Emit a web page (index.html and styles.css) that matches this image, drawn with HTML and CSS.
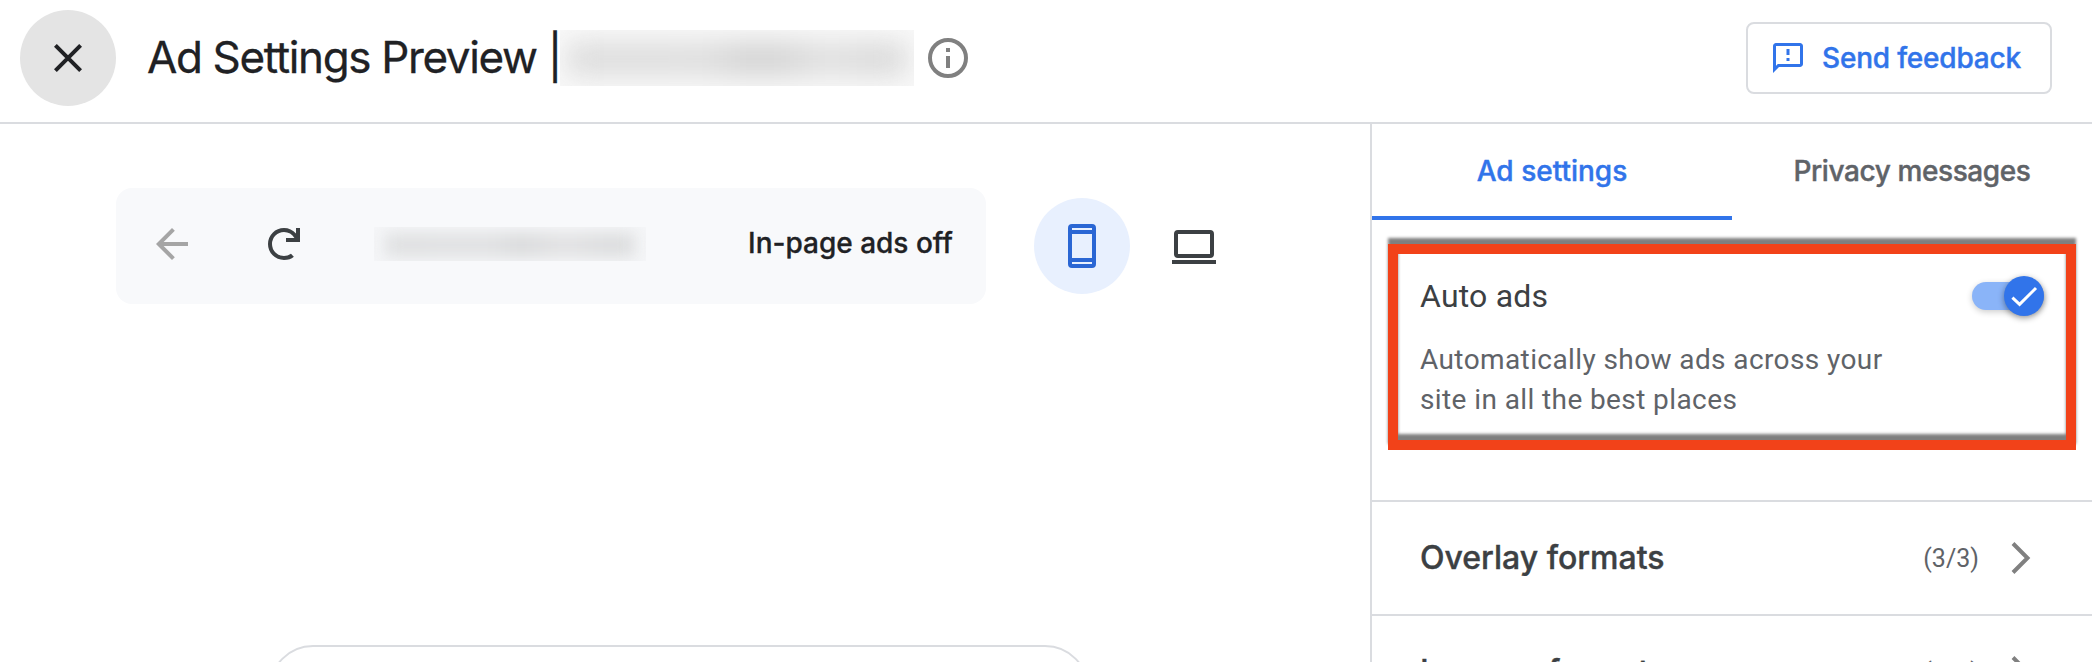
FILE: index.html
```
<!DOCTYPE html>
<html lang="en">
<head>
<meta charset="UTF-8" />
<meta name="viewport" content="width=device-width, initial-scale=1.0"/>
<title>Ad Settings Preview</title>
<link rel="stylesheet" href="styles.css">
</head>
<body>

<header class="header">
  <button class="close-btn" aria-label="Close">
    <svg width="28" height="28" viewBox="0 0 28 28"><path d="M1.4 1.4 L26.6 26.6 M26.6 1.4 L1.4 26.6" stroke="#202124" stroke-width="4" fill="none"/></svg>
  </button>
  <h1 class="title">Ad Settings Preview |</h1>
  <span class="redacted redacted-title"></span>
  <svg class="info" width="40" height="40" viewBox="0 0 40 40">
    <circle cx="20" cy="20" r="18" stroke="#808080" stroke-width="4" fill="none"/>
    <path d="M18 10h4v4h-4zM18 18h4v12h-4z" fill="#808080"/>
  </svg>
  <button class="feedback-btn">
    <svg width="36" height="36" viewBox="0 0 24 24" fill="#3174ea"><path d="M20 2H4c-1.1 0-1.99.9-1.99 2L2 22l4-4h14c1.1 0 2-.9 2-2V4c0-1.100-.9-2-2-2zm0 14H5.170l-.590.590-.580.580V4h16v12zM11 12h2v2h-2zm0-6h2v4h-2z"/></svg>
    <span class="feedback-label">Send feedback</span>
  </button>
</header>

<main class="main">
  <section class="preview">
    <div class="toolbar">
      <div class="nav-bar">
        <svg width="48" height="48" viewBox="0 0 24 24" fill="#a5a5a5"><path d="M20 11H7.830l5.590-5.590L12 4l-8 8 8 8 1.410-1.410L7.830 13H20v-2z"/></svg>
        <svg class="reload" width="48" height="48" viewBox="0 0 24 24" fill="#3c4043"><path d="M12 20q-3.350 0-5.675-2.325T4 12q0-3.350 2.325-5.675T12 4q1.725 0 3.300.712T18 6.750V4h2v7h-7V9h4.200q-.8-1.400-2.187-2.200T12 6Q9.500 6 7.750 7.750T6 12q0 2.500 1.750 4.250T12 18q1.925 0 3.475-1.100l1.450 1.450Q15.100 20 12 20z"/></svg>
        <span class="redacted redacted-url"></span>
        <span class="ads-state">In-page ads off</span>
      </div>
      <button class="device-btn active" aria-label="Mobile">
        <svg width="28" height="44" viewBox="0 0 28 44" fill="none" stroke="#2a66d4" stroke-width="4"><rect x="2" y="2" width="24" height="40" rx="2"/><path d="M2 8h24M2 36h24"/></svg>
      </button>
      <button class="device-btn" aria-label="Desktop">
        <svg width="44" height="36" viewBox="0 -2 44 36" fill="none" stroke="#3c4043" stroke-width="4"><rect x="4" y="2" width="36" height="24" rx="2"/><path d="M0 32h44"/></svg>
      </button>
    </div>
    <div class="phone-frame"></div>
  </section>

  <aside class="panel">
    <nav class="tabs">
      <a class="tab active">Ad settings</a>
      <a class="tab">Privacy messages</a>
    </nav>

    <div class="auto-ads">
      <div class="auto-ads-head">
        <h2>Auto ads</h2>
        <span class="toggle">
          <span class="thumb">
            <svg width="40" height="40" viewBox="0 0 40 40"><path d="M8.400 21.600 L15.600 28.400 L32 12" stroke="#fff" stroke-width="3" fill="none"/></svg>
          </span>
        </span>
      </div>
      <p>Automatically show ads across your<br>site in all the best places</p>
    </div>

    <div class="format-row">
      <span class="format-name">Overlay formats</span>
      <span class="count">(3/3)</span>
      <svg width="20" height="32" viewBox="0 0 20 32"><path d="M2 1.500 L16.500 16 L2 30.500" stroke="#808080" stroke-width="4" fill="none"/></svg>
    </div>
    <div class="format-row">
      <span class="format-name">In-page formats</span>
      <span class="count">(3/3)</span>
      <svg width="20" height="32" viewBox="0 0 20 32"><path d="M2 1.500 L16.500 16 L2 30.500" stroke="#808080" stroke-width="4" fill="none"/></svg>
    </div>
  </aside>
</main>

</body>
</html>
```
FILE: styles.css
```
* {
  box-sizing: border-box;
}
body {
  margin: 0;
  height: 662px;
  overflow: hidden;
  background: #fff;
  color: #202124;
  font-family: Inter, Roboto, sans-serif;
}
button {
  padding: 0;
  border: none;
  background: none;
  font: inherit;
}
svg {
  display: block;
  flex: none;
}

/* header */
.header {
  display: flex;
  align-items: center;
  height: 124px;
  padding: 0 40px 6px 20px;
  border-bottom: 2px solid #dadce0;
}
.close-btn {
  display: flex;
  align-items: center;
  justify-content: center;
  width: 96px;
  height: 96px;
  border-radius: 50%;
  background: #e4e4e4;
}
.title {
  width: 413px;
  margin: 0 0 0 31px;
  font-size: 44px;
  font-weight: 400;
  letter-spacing: -1.36px;
  line-height: 54px;
  padding-bottom: 2px;
  -webkit-text-stroke: 0.3px;
  white-space: nowrap;
}
/* blurred out site names */
.redacted {
  flex: none;
  display: flex;
  align-items: center;
  justify-content: center;
  overflow: hidden;
}
.redacted::before {
  content: "";
  flex: none;
}
.redacted-title {
  width: 354px;
  height: 56px;
  background: #f9f9f9;
}
.redacted-title::before {
  width: 340px;
  height: 32px;
  margin-top: 2px;
  background: linear-gradient(90deg, #dadada, #dcdcdc 40%, #cfcfcf 54%, #d2d2d2 64%, #dfdfdf 76%, #d8d8d8 90%);
  filter: blur(14px);
}
.info {
  margin-left: 14px;
}
.feedback-btn {
  display: flex;
  align-items: center;
  width: 306px;
  height: 72px;
  margin-left: auto;
  padding-left: 22px;
  border: 2px solid #dadce0;
  border-radius: 8px;
  color: #3174ea;
}
.feedback-label {
  margin-left: 16px;
  font-size: 28px;
  font-weight: 500;
  letter-spacing: -0.2px;
  -webkit-text-stroke: 0.4px;
  white-space: nowrap;
}

/* preview */
.main {
  display: flex;
  height: 538px;
}
.preview {
  width: 1370px;
  padding: 64px 0 0 116px;
  overflow: hidden;
}
.toolbar {
  display: flex;
  align-items: center;
}
.nav-bar {
  display: flex;
  align-items: center;
  width: 870px;
  height: 116px;
  margin-right: 48px;
  padding: 0 32px 4px;
  border-radius: 16px;
  background: #f8f9fb;
}
.reload {
  margin-left: 64px;
}
.redacted-url {
  width: 272px;
  height: 34px;
  margin-left: 66px;
  background: #f5f6f8;
}
.redacted-url::before {
  width: 250px;
  height: 24px;
  margin-top: 2px;
  background: linear-gradient(90deg, #dfe0e1, #e0e1e2 42%, #d9dadb 54%, #e2e2e3 72%, #dcddde 88%);
  filter: blur(8px);
}
.ads-state {
  margin-left: 102px;
  padding-bottom: 2px;
  font-size: 28px;
  font-weight: 500;
  line-height: 34px;
  -webkit-text-stroke: 0.3px;
  white-space: nowrap;
}
.device-btn {
  display: flex;
  align-items: center;
  justify-content: center;
  width: 96px;
  height: 96px;
  margin-right: 16px;
  border-radius: 50%;
}
.device-btn.active {
  background: #e8f0fe;
}
.phone-frame {
  width: 820px;
  height: 600px;
  margin: 341px 0 0 153px;
  border: 2px solid #dadce0;
  border-radius: 44px;
}

/* settings panel */
.panel {
  width: 722px;
  border-left: 2px solid #dadce0;
}
.tabs {
  display: flex;
  height: 96px;
}
.tab {
  width: 360px;
  padding-top: 27px;
  border-bottom: 4px solid transparent;
  color: #5f6368;
  font-size: 28px;
  font-weight: 500;
  letter-spacing: -0.4px;
  line-height: 40px;
  text-align: center;
  -webkit-text-stroke: 0.4px;
  white-space: nowrap;
}
.tab.active {
  border-bottom-color: #3174ea;
  color: #3174ea;
  letter-spacing: 0;
}
.auto-ads {
  position: relative;
  height: 206px;
  margin: 24px 16px 50px;
  padding: 28px 32px 0;
  font-family: Roboto, sans-serif;
}
/* highlight frame, the shadow falls upwards */
.auto-ads::after {
  content: "";
  position: absolute;
  inset: 0;
  border: 10px solid #f24219;
  filter: drop-shadow(0 -6px 1.5px rgba(0,0,0,.5));
}
.auto-ads-head {
  display: flex;
  align-items: center;
  justify-content: space-between;
  height: 48px;
}
.auto-ads h2 {
  margin: 0;
  color: #3c4043;
  font-size: 32px;
  font-weight: 400;
  letter-spacing: 0.2px;
}
.auto-ads p {
  margin: 20px 0 0;
  color: #5f6368;
  font-size: 28px;
  letter-spacing: 0.4px;
  line-height: 40px;
  white-space: nowrap;
}
.toggle {
  display: flex;
  align-items: center;
  justify-content: flex-end;
  width: 72px;
  height: 28px;
  border-radius: 14px;
  background: #8ab4f8;
  box-shadow: 0 2px 6px rgba(0,0,0,.2);
}
.thumb {
  flex: none;
  width: 40px;
  height: 40px;
  border-radius: 50%;
  background: #3174ea;
  box-shadow: 0 2px 6px rgba(0,0,0,.4);
}
.format-row {
  display: flex;
  align-items: center;
  height: 114px;
  padding: 0 61px 0 48px;
  border-top: 2px solid #dadce0;
}
.format-name {
  padding-bottom: 2px;
  color: #3c4043;
  font-size: 32px;
  font-weight: 500;
  -webkit-text-stroke: 0.4px;
  white-space: nowrap;
}
.count {
  margin: 0 32px 0 auto;
  color: #5f6368;
  font-family: Roboto, sans-serif;
  font-size: 25px;
}
```
